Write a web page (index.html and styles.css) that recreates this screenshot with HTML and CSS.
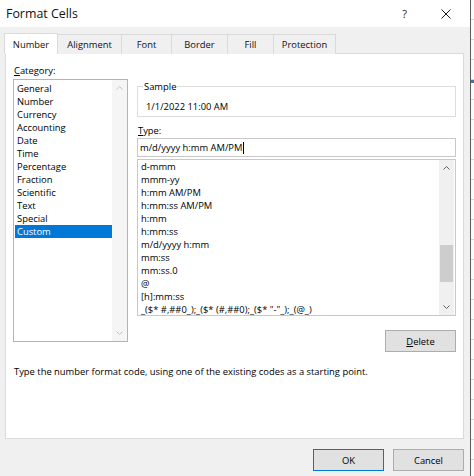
FILE: index.html
```html
<!DOCTYPE html>
<html lang="en">
<head>
<meta charset="utf-8">
<title>Format Cells</title>
<link rel="stylesheet" href="styles.css">
</head>
<body>
<div class="screen">
  <div class="dialog">
    <div class="titlebar">
      <span class="title">Format Cells</span>
      <span class="tb-btn help">?</span>
      <span class="tb-btn close">
        <svg width="10" height="10" viewBox="0 0 10 10"><path d="M0.5 0.5 L9.5 9.5 M9.5 0.5 L0.5 9.5" stroke="#1a1a1a" stroke-width="1" fill="none"/></svg>
      </span>
    </div>
    <div class="tabs">
      <div class="tab active w-number">Number</div>
      <div class="tab w-align">Alignment</div>
      <div class="tab w-font">Font</div>
      <div class="tab w-border">Border</div>
      <div class="tab w-fill">Fill</div>
      <div class="tab w-prot">Protection</div>
    </div>
    <div class="panel">
      <div class="cols">
        <div class="left">
          <div class="label cat-label"><u>C</u>ategory:</div>
          <div class="listbox">
            <div class="items">
              <div class="item">General</div>
              <div class="item">Number</div>
              <div class="item">Currency</div>
              <div class="item">Accounting</div>
              <div class="item">Date</div>
              <div class="item">Time</div>
              <div class="item">Percentage</div>
              <div class="item">Fraction</div>
              <div class="item">Scientific</div>
              <div class="item">Text</div>
              <div class="item">Special</div>
              <div class="item selected">Custom</div>
            </div>
            <div class="vscroll disabled">
              <span class="arrow">
                <svg width="7" height="4" viewBox="0 0 7 4"><path d="M0.5 3.5 L3.5 0.5 L6.5 3.5" stroke="#c4c4c4" fill="none"/></svg>
              </span>
              <span class="track"></span>
              <span class="arrow">
                <svg width="7" height="4" viewBox="0 0 7 4"><path d="M0.5 0.5 L3.5 3.5 L6.5 0.5" stroke="#c4c4c4" fill="none"/></svg>
              </span>
            </div>
          </div>
        </div>
        <div class="right">
          <fieldset class="group">
            <legend>Sample</legend>
            <div class="sample">1/1/2022 11:00 AM</div>
          </fieldset>
          <div class="label type-label"><u>T</u>ype:</div>
          <div class="input">m/d/yyyy h:mm AM/PM<span class="caret"></span></div>
          <div class="formats">
            <div class="items">
              <div class="item">d-mmm</div>
              <div class="item">mmm-yy</div>
              <div class="item">h:mm AM/PM</div>
              <div class="item">h:mm:ss AM/PM</div>
              <div class="item">h:mm</div>
              <div class="item">h:mm:ss</div>
              <div class="item">m/d/yyyy h:mm</div>
              <div class="item">mm:ss</div>
              <div class="item">mm:ss.0</div>
              <div class="item">@</div>
              <div class="item">[h]:mm:ss</div>
              <div class="item">_($* #,##0_);_($* (#,##0);_($* "-"_);_(@_)</div>
            </div>
            <div class="vscroll">
              <span class="arrow">
                <svg width="7" height="4" viewBox="0 0 7 4"><path d="M0.5 3.5 L3.5 0.5 L6.5 3.5" stroke="#606060" fill="none"/></svg>
              </span>
              <span class="track"><span class="thumb"></span></span>
              <span class="arrow">
                <svg width="7" height="4" viewBox="0 0 7 4"><path d="M0.5 0.5 L3.5 3.5 L6.5 0.5" stroke="#606060" fill="none"/></svg>
              </span>
            </div>
          </div>
          <button class="btn delete"><u>D</u>elete</button>
        </div>
      </div>
      <p class="desc">Type the number format code, using one of the existing codes as a starting point.</p>
    </div>
    <div class="footer">
      <button class="btn default">OK</button>
      <button class="btn">Cancel</button>
    </div>
  </div>
  <div class="outside"><span class="mark"></span></div>
</div>
</body>
</html>
```
FILE: styles.css
```css
* { box-sizing: border-box; }
html, body { margin: 0; padding: 0; }
body {
  font-family: "Open Sans", "Noto Sans", sans-serif;
  font-size: 9.4px;
  color: #000;
  background: #fff;
}
.screen {
  display: flex;
  width: 474px;
  height: 476px;
  overflow: hidden;
}
.dialog {
  width: 470px;
  height: 476px;
  background: #f0f0f0;
  display: flex;
  flex-direction: column;
}
.outside {
  width: 4px;
  border-left: 1px solid #5c5c5c;
  background: repeating-linear-gradient(to bottom, #fafafa 0, #fafafa 19px, #d6d6d6 19px, #d6d6d6 20px);
  position: relative;
}
.outside .mark {
  position: absolute;
  top: 80px;
  left: 0;
  width: 3px;
  height: 3px;
  background: #4b6ea8;
}
.titlebar {
  height: 27px;
  background: #fff;
  display: flex;
  align-items: center;
  padding-left: 6px;
  padding-right: 4px;
}
.title {
  font-size: 12.4px;
  flex: 1;
  color: #111;
}
.tb-btn {
  width: 41px;
  height: 27px;
  display: flex;
  align-items: center;
  justify-content: center;
}
.help {
  font-size: 11px;
  color: #222;
}
.tabs {
  display: flex;
  margin-top: 6px;
  padding-left: 4px;
  height: 21px;
  position: relative;
  z-index: 1;
}
.tab {
  height: 20px;
  margin-top: 1px;
  border-top: 1px solid #dadada;
  border-right: 1px solid #dadada;
  display: flex;
  align-items: center;
  justify-content: center;
  background: #f0f0f0;
  color: #111;
}
.tab.active {
  background: #fff;
  height: 21px;
  margin-top: 0;
  border-left: 1px solid #dadada;
}
.w-number { width: 54px; }
.w-align { width: 64px; }
.w-font { width: 50px; }
.w-border { width: 56px; }
.w-fill { width: 46px; }
.w-prot { width: 62px; }
.panel {
  margin: -1px 6px 0 5px;
  height: 386px;
  background: #fff;
  border: 1px solid #dadada;
  padding: 10px 7px 0 7px;
}
.cols {
  display: grid;
  grid-template-columns: 115px 319px;
  column-gap: 9px;
  align-items: start;
}
.label {
  height: 13px;
  line-height: 13px;
  padding-left: 1px;
}
.cat-label { margin-bottom: 2px; }
.listbox {
  height: 263px;
  border: 1px solid #b4b4b4;
  display: flex;
}
.items {
  flex: 1;
  padding: 2px 0 0 1px;
  overflow: hidden;
}
.item {
  height: 13px;
  line-height: 13px;
  padding-left: 2px;
  white-space: nowrap;
}
.item.selected {
  background: #0078d7;
  color: #fff;
}
.vscroll {
  width: 15px;
  display: flex;
  flex-direction: column;
  background: #f0f0f0;
}
.vscroll.disabled { background: #f5f5f5; }
.vscroll .arrow {
  height: 16px;
  display: flex;
  align-items: center;
  justify-content: center;
}
.vscroll .track {
  flex: 1;
  position: relative;
}
.thumb {
  position: absolute;
  left: 1px;
  right: 1px;
  top: 69px;
  height: 37px;
  background: #cdcdcd;
}
.right {
  display: flex;
  flex-direction: column;
  padding-top: 16px;
}
.group {
  margin: 0;
  padding: 0 0 3px 5px;
  border: 1px solid #dcdcdc;
  min-width: 0;
}
.group legend {
  padding: 0 1px;
  line-height: 13px;
  height: 13px;
}
.sample {
  margin-top: 7px;
  height: 13px;
  line-height: 13px;
  padding-left: 3px;
}
.type-label { margin-top: 7px; }
.input {
  margin-top: 1px;
  height: 19px;
  border: 1px solid #c8c8c8;
  line-height: 17px;
  padding-left: 2px;
  display: flex;
  align-items: center;
}
.caret {
  display: inline-block;
  width: 1px;
  height: 12px;
  background: #000;
  margin-left: 1px;
}
.formats {
  margin-top: 2px;
  height: 157px;
  border: 1px solid #c8c8c8;
  display: flex;
}
.formats .items { padding: 0 0 0 1px; }
.formats .vscroll { margin: 0 1px 0 0; width: 15px; }
.btn {
  font-family: inherit;
  font-size: 9.4px;
  width: 71px;
  height: 22px;
  background: #e1e1e1;
  border: 1px solid #adadad;
  color: #000;
  padding: 0;
  margin: 0;
}
.btn.default { border-color: #0078d7; }
.delete {
  margin-top: 14px;
  align-self: flex-end;
}
.desc {
  margin: 13px 0 0 0;
  padding-left: 1px;
  line-height: 13px;
}
.footer {
  display: flex;
  justify-content: flex-end;
  gap: 9px;
  padding: 10px 6px 0 0;
}
```
